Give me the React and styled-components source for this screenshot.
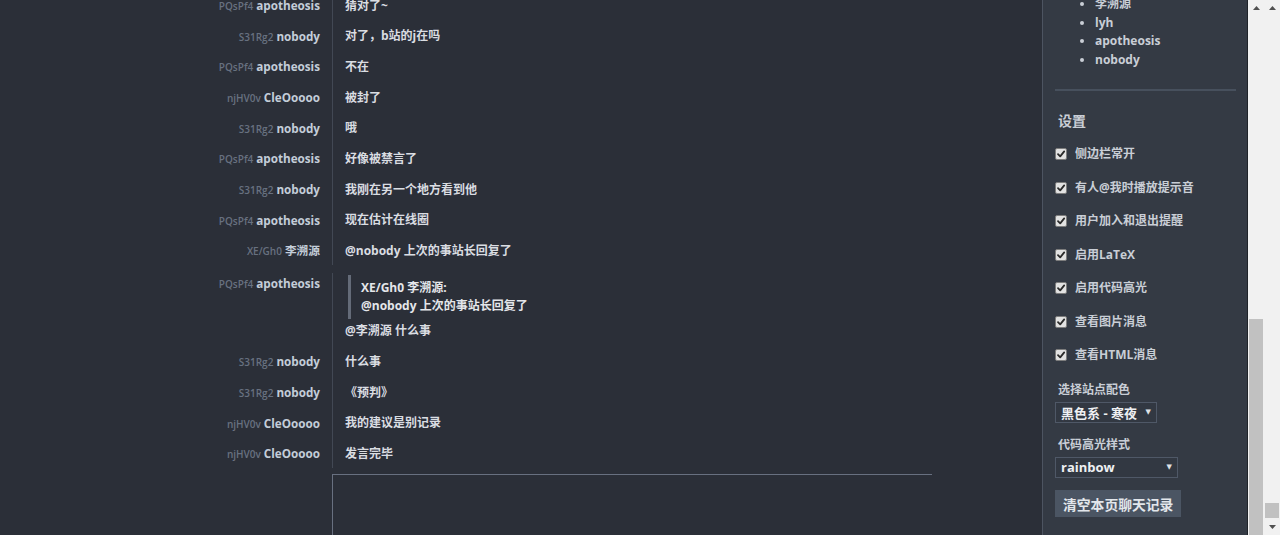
import React from 'react';
import styled, { createGlobalStyle } from 'styled-components';

const FONT = `"Open Sans", "Noto Sans CJK SC", "Noto Sans", sans-serif`;

const GlobalStyle = createGlobalStyle`
  html, body { margin: 0; padding: 0; background: #2b2f38; overflow: hidden; }
  body { font-family: ${FONT}; }
  *, *::before, *::after { box-sizing: border-box; }
`;

const Page = styled.div`
  display: flex;
  width: 1280px;
  height: 535px;
  overflow: hidden;
  background: #2b2f38;
`;

const Main = styled.main`
  flex: 0 0 1042px;
  height: 100%;
  display: flex;
  flex-direction: column;
  justify-content: flex-end;
  overflow: hidden;
`;

const MessageList = styled.div`
  flex: none;
  display: flex;
  flex-direction: column;
  margin-bottom: 5.67px;
`;

const Row = styled.div`
  display: flex;
  align-items: flex-start;
`;

const Nick = styled.div`
  flex: 0 0 332px;
  padding: ${(p) => (p.$quoted ? '8.8px' : '6.6px')} 12px 0 0;
  text-align: right;
  line-height: 18px;
  font-size: 11.7px;
  font-weight: 700;
  color: #c3cdd9;
  white-space: nowrap;
`;

const Trip = styled.span`
  font-size: 10px;
  font-weight: 600;
  line-height: 1;
  color: #687180;
  margin-right: 3px;
`;

const Text = styled.div`
  flex: 1;
  border-left: 1px solid #424854;
  margin-top: ${(p) => (p.$quoted ? '7.67px' : '0')};
  padding: ${(p) => (p.$quoted ? '2px 0 5.67px 12px' : '7.33px 0 5.33px 12px')};
  font-size: 12px;
  line-height: 18px;
  font-weight: 700;
  color: #dadde2;
`;

const Quote = styled.blockquote`
  margin: 0 0 0 3px;
  border-left: 3px solid #646b78;
  padding: 4px 0 4px 10px;
  color: #e4e6ea;
`;

const QuoteLine = styled.div``;

const AfterQuote = styled.div`
  margin-top: 3px;
`;

const InputRow = styled.div`
  flex: none;
  height: 61px;
  padding-left: 332px;
  display: flex;
`;

const ChatInput = styled.textarea`
  width: 600px;
  height: 100%;
  border: none;
  border-top: 1px solid #687080;
  border-left: 1px solid #687080;
  background: transparent;
  resize: none;
  outline: none;
  color: #dadde2;
  font-family: ${FONT};
`;

const Sidebar = styled.aside`
  flex: 0 0 206px;
  height: 100%;
  background: #343a44;
  border-left: 1px solid #4d5461;
  border-right: 1px solid #1f2329;
  display: flex;
  flex-direction: column;
  justify-content: flex-end;
  overflow: hidden;
  padding: 0 11px 18px 12px;
  color: #c9ced6;
  font-size: 12px;
  font-weight: 700;
  & > * { flex-shrink: 0; }
`;

const UserList = styled.ul`
  margin: 0;
  padding-left: 40px;
  line-height: 18.67px;
`;

const Divider = styled.hr`
  margin: 19px 0 0;
  border: 0;
  border-top: 2px solid #47505d;
  height: 0;
`;

const Heading = styled.h3`
  margin: 20px 0 0;
  padding-left: 3px;
  font-size: 14px;
  line-height: 20px;
  font-weight: 700;
`;

const CheckList = styled.div`
  margin-top: 5.9px;
  display: flex;
  flex-direction: column;
`;

const CheckRow = styled.label`
  display: flex;
  align-items: center;
  height: 33.5px;
  padding-top: 2px;
  gap: 8px;
  line-height: 18px;
`;

const Box = styled.span`
  flex: none;
  width: 12px;
  height: 12px;
  border-radius: 2px;
  background: #e2e2e2;
  border: 1px solid #7d7d7d;
  display: flex;
  align-items: center;
  justify-content: center;
`;

const FieldLabel = styled.div`
  padding: 2px 0 0 3px;
  height: 18px;
  line-height: 16px;
  margin-top: ${(p) => p.$mt}px;
`;

const SelectBox = styled.div`
  width: ${(p) => p.$w}px;
  height: 21px;
  margin-top: 4px;
  border: 1px solid #4f5867;
  background: #323842;
  display: flex;
  align-items: center;
  justify-content: space-between;
  padding: 0 5px;
  font-size: 13px;
  color: #eef0f3;
`;

const Caret = styled.span`
  font-family: "DejaVu Sans", sans-serif;
  font-size: 7px;
  color: #dfe2e6;
`;

const ClearButton = styled.button`
  align-self: flex-start;
  margin-top: 12.3px;
  height: 27px;
  padding: 0 8px;
  border: none;
  background: #4b5563;
  color: #e2e6eb;
  font-family: ${FONT};
  font-size: 13.8px;
  font-weight: 700;
`;

const ScrollTrack = styled.div`
  flex: 0 0 16px;
  height: 100%;
  background: #f1f1f1;
  display: flex;
  flex-direction: column;
  align-items: center;
`;

const ScrollButton = styled.div`
  flex: none;
  height: ${(p) => p.$h || 16}px;
  width: 100%;
  display: flex;
  align-items: center;
  justify-content: center;
`;

const ScrollThumb = styled.div`
  flex: ${(p) => (p.$fill ? '1' : 'none')};
  width: 14px;
  height: ${(p) => (p.$h ? `${p.$h}px` : 'auto')};
  margin-top: ${(p) => p.$mt || 0}px;
  margin-bottom: ${(p) => p.$mb || 0}px;
  background: #c1c1c1;
`;

const Spacer = styled.div`
  flex: 1;
`;

const UpArrow = () => (
  <svg width="7" height="4" viewBox="0 0 7 4"><polygon points="0,4 3.5,0 7,4" fill="#505050" /></svg>
);
const DownArrow = () => (
  <svg width="7" height="4" viewBox="0 0 7 4"><polygon points="0,0 7,0 3.5,4" fill="#505050" /></svg>
);
const Check = () => (
  <svg width="10" height="10" viewBox="0 0 10 10">
    <path d="M2 5.2 L4.2 7.4 L8.2 2.4" fill="none" stroke="#2a2a2a" strokeWidth="1.8" strokeLinecap="round" strokeLinejoin="round" />
  </svg>
);

const messages = [
  { trip: 'PQsPf4', nick: 'apotheosis', text: '猜对了~' },
  { trip: 'S31Rg2', nick: 'nobody', text: '对了，b站的j在吗' },
  { trip: 'PQsPf4', nick: 'apotheosis', text: '不在' },
  { trip: 'njHV0v', nick: 'CleOoooo', text: '被封了' },
  { trip: 'S31Rg2', nick: 'nobody', text: '哦' },
  { trip: 'PQsPf4', nick: 'apotheosis', text: '好像被禁言了' },
  { trip: 'S31Rg2', nick: 'nobody', text: '我刚在另一个地方看到他' },
  { trip: 'PQsPf4', nick: 'apotheosis', text: '现在估计在线圈' },
  { trip: 'XE/Gh0', nick: '李溯源', text: '@nobody 上次的事站长回复了' },
  {
    trip: 'PQsPf4',
    nick: 'apotheosis',
    quote: ['XE/Gh0 李溯源:', '@nobody 上次的事站长回复了'],
    text: '@李溯源 什么事',
  },
  { trip: 'S31Rg2', nick: 'nobody', text: '什么事' },
  { trip: 'S31Rg2', nick: 'nobody', text: '《预判》' },
  { trip: 'njHV0v', nick: 'CleOoooo', text: '我的建议是别记录' },
  { trip: 'njHV0v', nick: 'CleOoooo', text: '发言完毕' },
];

const users = ['李溯源', 'lyh', 'apotheosis', 'nobody'];
const options = [
  '侧边栏常开',
  '有人@我时播放提示音',
  '用户加入和退出提醒',
  '启用LaTeX',
  '启用代码高光',
  '查看图片消息',
  '查看HTML消息',
];

export default function App() {
  return (
    <>
      <GlobalStyle />
      <Page>
        <Main>
          <MessageList>
            {messages.map((m, i) => {
              const quoted = !!m.quote;
              return (
                <Row key={i}>
                  <Nick $quoted={quoted}>
                    <Trip>{m.trip}</Trip>
                    {m.nick}
                  </Nick>
                  <Text $quoted={quoted}>
                    {quoted ? (
                      <>
                        <Quote>
                          {m.quote.map((q, j) => (
                            <QuoteLine key={j}>{q}</QuoteLine>
                          ))}
                        </Quote>
                        <AfterQuote>{m.text}</AfterQuote>
                      </>
                    ) : (
                      m.text
                    )}
                  </Text>
                </Row>
              );
            })}
          </MessageList>
          <InputRow>
            <ChatInput />
          </InputRow>
        </Main>
        <Sidebar>
          <UserList>
            {users.map((u) => (
              <li key={u}>{u}</li>
            ))}
          </UserList>
          <Divider />
          <Heading>设置</Heading>
          <CheckList>
            {options.map((o) => (
              <CheckRow key={o}>
                <Box>
                  <Check />
                </Box>
                {o}
              </CheckRow>
            ))}
          </CheckList>
          <FieldLabel $mt={8.65}>选择站点配色</FieldLabel>
          <SelectBox $w={102}>
            <span>黑色系 - 寒夜</span>
            <Caret>▼</Caret>
          </SelectBox>
          <FieldLabel $mt={12}>代码高光样式</FieldLabel>
          <SelectBox $w={123}>
            <span>rainbow</span>
            <Caret>▼</Caret>
          </SelectBox>
          <ClearButton>清空本页聊天记录</ClearButton>
        </Sidebar>
        <ScrollTrack>
          <ScrollButton $h={16}>
            <UpArrow />
          </ScrollButton>
          <ScrollThumb $fill $mt={303} />
        </ScrollTrack>
        <ScrollTrack>
          <ScrollButton $h={16}>
            <UpArrow />
          </ScrollButton>
          <Spacer />
          <ScrollThumb $h={15} $mb={1} />
          <ScrollButton $h={16}>
            <DownArrow />
          </ScrollButton>
        </ScrollTrack>
      </Page>
    </>
  );
}
